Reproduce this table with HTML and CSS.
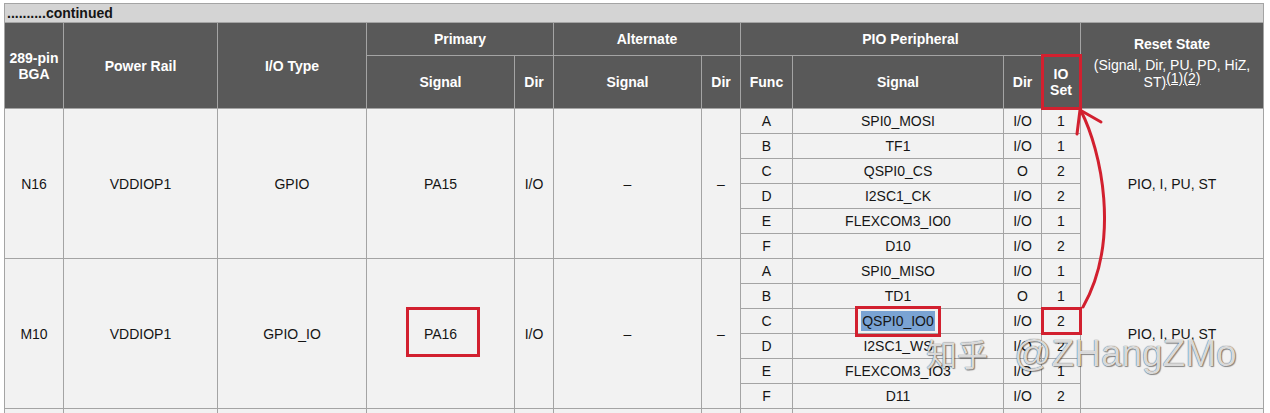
FILE: index.html
```html
<!DOCTYPE html>
<html lang="en">
<head>
<meta charset="utf-8">
<title>Pin list continued</title>
<link rel="stylesheet" href="styles.css">
</head>
<body>
<table class="pins">
  <colgroup>
    <col class="w-bga"><col class="w-rail"><col class="w-type">
    <col class="w-sig"><col class="w-dir"><col class="w-sig"><col class="w-dir">
    <col class="w-func"><col class="w-psig"><col class="w-pdir"><col class="w-set">
    <col class="w-reset">
  </colgroup>
  <thead>
    <tr class="cont"><td colspan="12">..........continued</td></tr>
    <tr class="h1">
      <th rowspan="2" class="bga">289-pin<br>BGA</th>
      <th rowspan="2">Power Rail</th>
      <th rowspan="2">I/O Type</th>
      <th colspan="2">Primary</th>
      <th colspan="2">Alternate</th>
      <th colspan="4">PIO Peripheral</th>
      <th rowspan="2" class="reset">
        <div class="reset-title">Reset State</div>
        <div class="reset-sub">(Signal, Dir, PU, PD, HiZ, ST)<sup class="ref">(1)(2)</sup></div>
      </th>
    </tr>
    <tr class="h2">
      <th>Signal</th><th>Dir</th><th>Signal</th><th>Dir</th>
      <th>Func</th><th>Signal</th><th>Dir</th><th class="mark set-head">IO<br>Set</th>
    </tr>
  </thead>
  <tbody>
    <tr>
      <td rowspan="6">N16</td><td rowspan="6">VDDIOP1</td><td rowspan="6">GPIO</td>
      <td rowspan="6">PA15</td><td rowspan="6">I/O</td><td rowspan="6">–</td><td rowspan="6">–</td>
      <td>A</td><td>SPI0_MOSI</td><td>I/O</td><td>1</td>
      <td rowspan="6">PIO, I, PU, ST</td>
    </tr>
    <tr><td>B</td><td>TF1</td><td>I/O</td><td>1</td></tr>
    <tr><td>C</td><td>QSPI0_CS</td><td>O</td><td>2</td></tr>
    <tr><td>D</td><td>I2SC1_CK</td><td>I/O</td><td>2</td></tr>
    <tr><td>E</td><td>FLEXCOM3_IO0</td><td>I/O</td><td>1</td></tr>
    <tr><td>F</td><td>D10</td><td>I/O</td><td>2</td></tr>
    <tr>
      <td rowspan="6">M10</td><td rowspan="6">VDDIOP1</td><td rowspan="6">GPIO_IO</td>
      <td rowspan="6"><span class="boxed">PA16</span></td><td rowspan="6">I/O</td><td rowspan="6">–</td><td rowspan="6">–</td>
      <td>A</td><td>SPI0_MISO</td><td>I/O</td><td>1</td>
      <td rowspan="6">PIO, I, PU, ST</td>
    </tr>
    <tr><td>B</td><td>TD1</td><td>O</td><td>1</td></tr>
    <tr><td>C</td><td><span class="sel">QSPI0_IO0</span></td><td>I/O</td><td class="mark">2</td></tr>
    <tr><td>D</td><td>I2SC1_WS</td><td>I/O</td><td>2</td></tr>
    <tr><td>E</td><td>FLEXCOM3_IO3</td><td>I/O</td><td>1</td></tr>
    <tr><td>F</td><td>D11</td><td>I/O</td><td>2</td></tr>
    <tr class="next">
      <td></td><td></td><td></td><td></td><td></td><td></td><td></td>
      <td></td><td></td><td></td><td></td><td></td>
    </tr>
  </tbody>
</table>

<svg class="arrow" width="1270" height="413" viewBox="0 0 1270 413" aria-hidden="true">
  <path d="M1081 111 C1101 150 1121 240 1083 307" />
  <path d="M1101 122 L1080 110 L1077 134" />
</svg>

<div class="watermark"><span class="wm-cjk">知乎</span><span class="wm-lat">@ZHangZMo</span></div>
</body>
</html>
```
FILE: styles.css
```css
html, body {
  margin: 0;
  background: #ffffff;
}

body {
  position: relative;
  width: 1270px;
  height: 413px;
  overflow: hidden;
  font-family: "Liberation Sans", Arial, sans-serif;
  font-size: 14px;
  color: #151515;
}

.pins {
  border-collapse: collapse;
  table-layout: fixed;
  width: 1260px;
  margin: 3px 0 0 4px;
}

.w-bga { width: 59px; }
.w-rail { width: 154px; }
.w-type { width: 149px; }
.w-sig { width: 148px; }
.w-dir { width: 39px; }
.w-func { width: 52px; }
.w-psig { width: 211px; }
.w-pdir { width: 38px; }
.w-set { width: 39px; }
.w-reset { width: 183px; }

.pins td,
.pins th {
  border: 1px solid #a4a4a4;
  padding: 0;
  text-align: center;
  vertical-align: middle;
  line-height: 16px;
}

.cont td {
  height: 18px;
  background: #d4d4d4;
  text-align: left;
  font-weight: bold;
  padding-left: 2px;
}

thead th {
  background: #595959;
  color: #ffffff;
  font-weight: bold;
}

.h1 th { height: 32px; }
.h2 th { height: 52px; }

.bga { line-height: 22px; }
.set-head { line-height: 20px; }

.pins .reset {
  padding-bottom: 6px;
}

.reset-title {
  line-height: 20px;
  margin-bottom: 3px;
}

.reset-sub {
  font-weight: normal;
  line-height: 17px;
  padding: 0 8px;
}

.ref {
  font-size: 14px;
  vertical-align: 4px;
  line-height: 0;
  text-decoration: underline;
}

tbody td {
  height: 24px;
  background: #f2f2f2;
}

.mark { position: relative; }

.mark::after {
  content: "";
  position: absolute;
  inset: -2px -2px -2px -1px;
  border: 3px solid #d2202f;
}

.boxed {
  position: relative;
}

.boxed::after {
  content: "";
  position: absolute;
  top: -19px;
  bottom: -15px;
  left: -18px;
  right: -23px;
  border: 3px solid #d2202f;
}

.sel {
  position: relative;
  background: #7aa3d3;
  padding: 2px 1px;
}

.sel::after {
  content: "";
  position: absolute;
  top: -5px;
  bottom: -6px;
  left: -6px;
  right: -6px;
  border: 3px solid #d2202f;
}

.arrow {
  position: absolute;
  left: 0;
  top: 0;
  pointer-events: none;
  fill: none;
  stroke: #d2202f;
  stroke-width: 3;
  stroke-linecap: round;
  stroke-linejoin: round;
}

.watermark {
  position: absolute;
  left: 926px;
  top: 331px;
  white-space: nowrap;
  color: rgba(250, 250, 250, 0.85);
  text-shadow: 0 0 1px rgba(30, 30, 30, 0.95), 1px 1px 1px rgba(0, 0, 0, 0.4);
  pointer-events: none;
  line-height: 44px;
}

.wm-cjk {
  font-family: "Noto Sans CJK SC", sans-serif;
  font-size: 31px;
}

.wm-lat {
  margin-left: 26px;
  font-family: "Liberation Sans", Arial, sans-serif;
  font-size: 37px;
}
```
